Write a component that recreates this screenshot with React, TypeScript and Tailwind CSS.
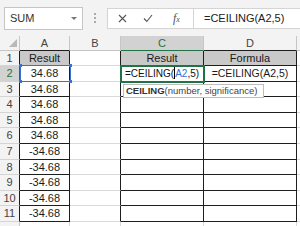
import React from 'react';

const GRID = 'border-[#d9d9d9]';
const BLACK = 'border-[#1e1e1e]';

const heights = [15, 16, 15, 16, 15, 16, 16, 15, 16, 15, 16];
const values = ['34.68', '34.68', '34.68', '34.68', '34.68', '-34.68', '-34.68', '-34.68', '-34.68', '-34.68'];

function HeaderRow() {
  return (
    <div className="flex h-[15px] bg-[#f3f3f3] text-[11px] text-[#444]">
      <div className="relative w-[20px] shrink-0 border-r border-b border-[#c6c6c6]">
        <div className="absolute right-[2px] bottom-[3px] w-0 h-0 border-l-[8px] border-l-transparent border-b-[8px] border-b-[#b8b8b8]" />
      </div>
      <div className={`w-[50px] shrink-0 flex items-center justify-center border-r border-r-[#c6c6c6] border-b ${BLACK}`}>A</div>
      <div className="w-[51px] shrink-0 flex items-center justify-center border-r border-b border-[#c6c6c6]">B</div>
      <div className="w-[83px] shrink-0 flex items-center justify-center bg-[#d2d2d2] text-[#217346] border-r border-r-[#c6c6c6] border-b border-b-[#217346]">C</div>
      <div className={`w-[93px] shrink-0 flex items-center justify-center border-r border-r-[#c6c6c6] border-b ${BLACK}`}>D</div>
      <div className="flex-1 border-b border-[#c6c6c6]" />
    </div>
  );
}

function C2Content() {
  return (
    <span className="pl-[4px] whitespace-nowrap text-[10px] text-[#111]">
      =CEILING(
      <span className="inline-block w-px h-[12px] bg-black align-[-2px]" />
      <span className="text-[#3a6fd8]">A2</span>,5)
    </span>
  );
}

function DataRow({ index, h }: { index: number; h: number }) {
  const rowNum = index + 1;
  const isHead = index === 0;
  const selected = rowNum === 2;
  const fill = isHead ? 'bg-[#c9c9c9]' : '';
  return (
    <div className="flex text-[11px] text-[#1a1a1a]" style={{ height: h }}>
      <div
        className={`w-[20px] shrink-0 flex items-center justify-center border-b border-b-[#d4d4d4] border-r ${
          selected ? 'bg-[#d2d2d2] text-[#217346] border-r-[#217346]' : 'bg-[#f3f3f3] text-[#444] border-r-[#1e1e1e]'
        }`}
      >
        {rowNum}
      </div>
      <div className={`w-[50px] shrink-0 flex items-center justify-center border-r border-b ${BLACK} ${fill}`}>
        {isHead ? 'Result' : values[index - 1]}
      </div>
      <div className={`w-[51px] shrink-0 border-r border-r-[#1e1e1e] border-b ${GRID}`} />
      <div className={`w-[83px] shrink-0 flex items-center ${isHead ? 'justify-center' : ''} border-r border-b ${BLACK} ${fill}`}>
        {isHead ? 'Result' : selected ? <C2Content /> : null}
      </div>
      <div className={`w-[93px] shrink-0 flex items-center justify-center border-r border-b ${BLACK} ${fill}`}>
        {isHead ? 'Formula' : selected ? <span className="text-[10.5px]">=CEILING(A2,5)</span> : null}
      </div>
      <div className={`flex-1 border-b ${GRID}`} />
    </div>
  );
}

function FormulaBar() {
  return (
    <div className="flex items-center h-[36px] bg-[#f3f3f3] text-[#333]">
      <div className="ml-[4px] w-[79px] h-[23px] bg-white border border-[#c6c6c6] flex items-center justify-between pl-[5px] pr-[5px] text-[11px]">
        <span>SUM</span>
        <span className="w-0 h-0 border-l-[3px] border-r-[3px] border-t-[3px] border-l-transparent border-r-transparent border-t-[#777]" />
      </div>
      <div className="ml-[11px] flex flex-col gap-[2px]">
        <span className="w-[2px] h-[2px] bg-[#aaa]" />
        <span className="w-[2px] h-[2px] bg-[#aaa]" />
        <span className="w-[2px] h-[2px] bg-[#aaa]" />
      </div>
      <div className="ml-[11px] flex-1 h-[21px] bg-white border border-[#d4d4d4] border-r-0 flex items-center">
        <div className="w-[86px] h-full flex items-center border-r border-[#d4d4d4]">
          <svg className="ml-[10px]" width="9" height="9" viewBox="0 0 9 9">
            <path d="M1 1L8 8M8 1L1 8" stroke="#555" strokeWidth="1.1" fill="none" />
          </svg>
          <svg className="ml-[16px]" width="10" height="9" viewBox="0 0 10 9">
            <path d="M1 4.5L3.8 7.5L9 1" stroke="#555" strokeWidth="1.1" fill="none" />
          </svg>
          <span className="ml-[20px] font-['Liberation_Serif',serif] italic text-[12px] text-[#555] leading-none">
            f<span className="text-[8px]">x</span>
          </span>
        </div>
        <span className="ml-[10px] text-[11px] text-[#222] whitespace-nowrap">=CEILING(A2,5)</span>
      </div>
    </div>
  );
}

export default function App() {
  return (
    <div className="relative w-[300px] h-[226px] overflow-hidden bg-white font-['Liberation_Sans',Arial,sans-serif]">
      <FormulaBar />
      <HeaderRow />
      {heights.map((h, i) => (
        <DataRow key={i} index={i} h={h} />
      ))}
      <div className="flex h-[10px]">
        <div className="w-[20px] shrink-0 bg-[#f3f3f3] border-r border-[#c6c6c6]" />
        <div className={`w-[50px] shrink-0 border-r ${GRID}`} />
        <div className={`w-[51px] shrink-0 border-r ${GRID}`} />
        <div className={`w-[83px] shrink-0 border-r ${GRID}`} />
        <div className={`w-[93px] shrink-0 border-r ${GRID}`} />
      </div>

      {/* A2 reference highlight */}
      <div className="absolute left-[20px] top-[65px] w-[51px] h-[17px] border border-[#3a6fd8]">
        <span className="absolute -left-[2px] -top-[2px] w-[3px] h-[3px] bg-[#3a6fd8]" />
        <span className="absolute -right-[2px] -top-[2px] w-[3px] h-[3px] bg-[#3a6fd8]" />
        <span className="absolute -left-[2px] -bottom-[2px] w-[3px] h-[3px] bg-[#3a6fd8]" />
        <span className="absolute -right-[2px] -bottom-[2px] w-[3px] h-[3px] bg-[#3a6fd8]" />
      </div>

      {/* C2 active cell */}
      <div className="absolute left-[120px] top-[65px] w-[85px] h-[18px] border-2 border-[#217346]" />

      {/* function tooltip */}
      <div className="absolute left-[123px] top-[84px] w-[141px] h-[14px] bg-white border border-[#bdbdbd] flex items-center pl-[2px] text-[9.5px] text-[#444] whitespace-nowrap">
        <span className="font-bold text-[#333]">CEILING</span>(number, significance)
      </div>
    </div>
  );
}
